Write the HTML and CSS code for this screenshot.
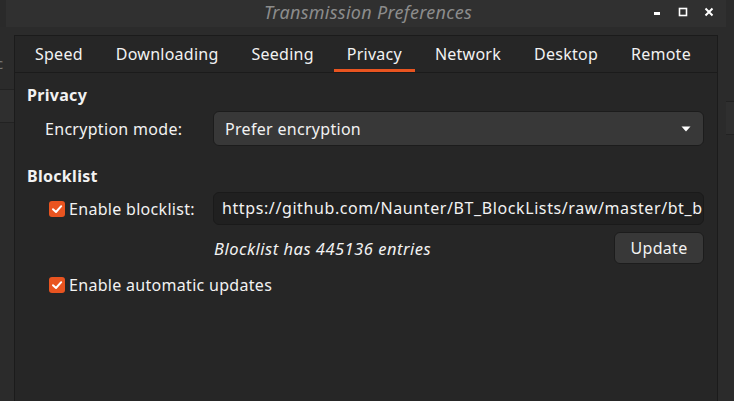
FILE: index.html
```html
<!DOCTYPE html>
<html>
<head>
<meta charset="utf-8">
<link rel="stylesheet" href="styles.css">
</head>
<body>
<div class="screen">
  <div class="topline">
    <div class="edge"></div>
    <div class="titlebar">
      <span class="title">Transmission Preferences</span>
      <div class="wbtns">
        <svg class="wbtn" width="10" height="10" viewBox="0 0 10 10"><rect x="2" y="5" width="6" height="3" fill="#ffffff"/></svg>
        <svg class="wbtn" width="10" height="10" viewBox="0 0 10 10"><rect x="1.5" y="1.5" width="7" height="7" fill="none" stroke="#ffffff" stroke-width="1.6"/></svg>
        <svg class="wbtn" width="10" height="10" viewBox="0 0 10 10"><path d="M1.5 1.5 L8.5 8.5 M8.5 1.5 L1.5 8.5" stroke="#ffffff" stroke-width="2"/></svg>
      </div>
    </div>
  </div>
  <div class="body-row">
    <div class="gutter left"><span class="ghost">c</span><div class="band"></div></div>
    <div class="notebook">
      <div class="tabs">
        <div class="tab">Speed</div>
        <div class="tab">Downloading</div>
        <div class="tab">Seeding</div>
        <div class="tab active">Privacy</div>
        <div class="tab">Network</div>
        <div class="tab">Desktop</div>
        <div class="tab">Remote</div>
      </div>
      <div class="page">
        <div class="section">Privacy</div>
        <div class="row">
          <div class="label indent">Encryption mode:</div>
          <div class="combo">
            <span>Prefer encryption</span>
            <svg width="10" height="6" viewBox="0 0 10 6"><path d="M0.5 0.5 H9.5 L5 5.5 Z" fill="#ffffff"/></svg>
          </div>
        </div>
        <div class="section second">Blocklist</div>
        <div class="row entry-row">
          <label class="check"><span class="box"><svg width="16" height="16" viewBox="0 0 16 16"><path d="M4 8.2 L7 11 L12.2 5.2" fill="none" stroke="#ffffff" stroke-width="2" stroke-linecap="round" stroke-linejoin="round"/></svg></span>Enable blocklist:</label>
          <div class="entry">https://github.com/Naunter/BT_BlockLists/raw/master/bt_blocklists.gz</div>
        </div>
        <div class="row info">
          <div></div>
          <div class="info-line">
            <span class="count">Blocklist has 445136 entries</span>
            <button class="btn">Update</button>
          </div>
        </div>
        <div class="auto">
          <label class="check"><span class="box"><svg width="16" height="16" viewBox="0 0 16 16"><path d="M4 8.2 L7 11 L12.2 5.2" fill="none" stroke="#ffffff" stroke-width="2" stroke-linecap="round" stroke-linejoin="round"/></svg></span>Enable automatic updates</label>
        </div>
      </div>
    </div>
    <div class="gutter right"><div class="band"></div></div>
  </div>
</div>
</body>
</html>
```

FILE: styles.css
```css
* { box-sizing: border-box; }
html, body {
  margin: 0;
  padding: 0;
  background: #2b2b2b;
  width: 734px;
  height: 401px;
  overflow: hidden;
  font-family: "Noto Sans", "Open Sans", sans-serif;
  font-size: 16px;
  letter-spacing: 0.3px;
  color: #f2f2f2;
}
.screen { display: flex; flex-direction: column; height: 401px; }
.topline { display: flex; height: 27px; }
.edge { width: 6px; background: #2a2a2a; }
.titlebar {
  width: 720px;
  background: #303030;
  display: flex;
  align-items: center;
  justify-content: center;
  position: relative;
}
.title {
  font-style: italic;
  font-size: 18px;
  letter-spacing: 0.3px;
  color: #8c8c8c;
  margin-top: -4px;
  margin-left: 4px;
}
.wbtns {
  position: absolute;
  right: 12px;
  top: 7px;
  display: flex;
  gap: 16px;
}
.wbtn { display: block; }
.body-row { display: flex; flex: 1; }
.gutter { background: #2b2b2b; position: relative; overflow: hidden; }
.gutter.left { width: 14px; }
.gutter.right { width: 16px; }
.gutter .band {
  margin-top: 74px;
  height: 34px;
  border-top: 1px solid #222222;
  border-bottom: 1px solid #222222;
  background: #2f2f2f;
}
.gutter.right .band { margin-left: 8px; }
.gutter.left .band { margin-top: 12px; }
.ghost {
  display: block;
  margin-top: 22px;
  margin-left: -4px;
  height: 28px;
  line-height: 28px;
  color: #777777;
  font-size: 15px;
}
.notebook {
  width: 704px;
  margin-top: 8px;
  border: 1px solid #1b1b1b;
  border-bottom: none;
  background: #262626;
  display: flex;
  flex-direction: column;
}
.tabs {
  display: flex;
  height: 37px;
  border-bottom: 1px solid #1b1b1b;
  padding-left: 7px;
  gap: 7px;
}
.tab {
  padding: 0 13px;
  display: flex;
  align-items: center;
  font-size: 16px;
  letter-spacing: 0.25px;
  color: #f2f2f2;
  border-bottom: 3px solid transparent;
  padding-top: 3px;
}
.tab.active { border-bottom-color: #e95420; }
.page { padding: 12px 12px 0 12px; }
.section { font-weight: bold; height: 20px; line-height: 20px; }
.section.second { margin-top: 20px; }
.row {
  display: grid;
  grid-template-columns: 186px 491px;
  align-items: center;
  margin-top: 6px;
}
.row.entry-row { margin-top: 6px; }
.label { line-height: 20px; }
.indent { padding-left: 18px; }
.combo {
  height: 35px;
  background: #383838;
  border: 1px solid #1c1c1c;
  border-radius: 6px;
  display: flex;
  align-items: center;
  justify-content: space-between;
  padding: 0 12px 0 11px;
}
.combo svg { display: block; }
.check { display: flex; align-items: center; padding-left: 22px; gap: 4px; }
.box {
  width: 16px; height: 16px;
  border-radius: 3px;
  background: #e95420;
  display: block;
  flex: none;
}
.box svg { display: block; }
.entry {
  height: 33px;
  background: #202020;
  border: 1px solid #1a1a1a;
  border-radius: 6px;
  padding: 0 8px;
  line-height: 31px;
  letter-spacing: 0.6px;
  white-space: nowrap;
  overflow: hidden;
}
.row.info { margin-top: 7px; }
.info-line { display: flex; align-items: center; justify-content: space-between; }
.count { font-style: italic; font-size: 16.5px; letter-spacing: 0.5px; padding-left: 1px; }
.btn {
  width: 90px;
  height: 32px;
  background: #383838;
  border: 1px solid #1c1c1c;
  border-radius: 6px;
  color: #f2f2f2;
  font-family: inherit;
  font-size: 16px;
  letter-spacing: 0.3px;
  padding: 0;
}
.auto { margin-top: 10px; }
```
